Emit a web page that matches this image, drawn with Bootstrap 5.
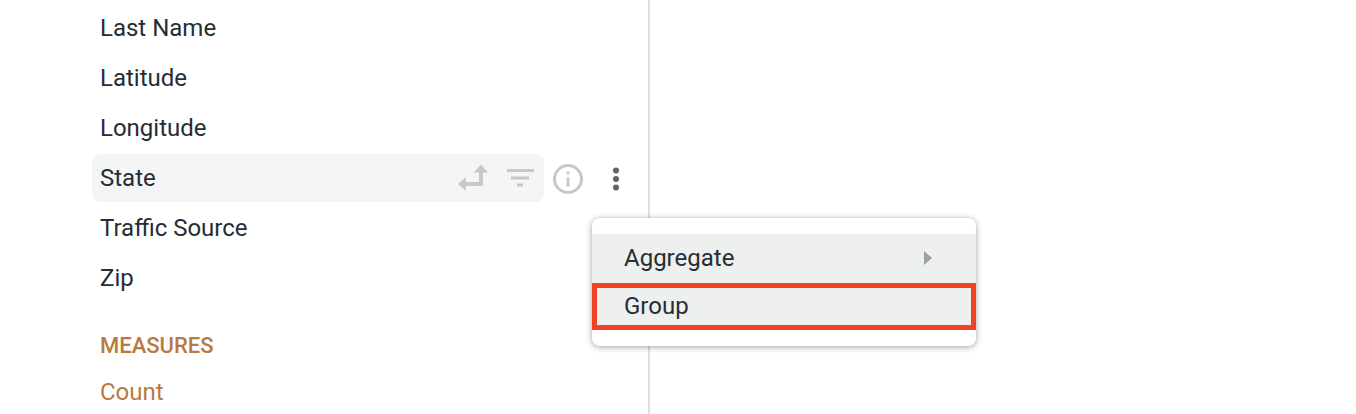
<!DOCTYPE html>
<html lang="en">
<head>
    <meta charset="UTF-8">
    <title>Field picker</title>
    <link rel="stylesheet" href="https://cdn.jsdelivr.net/npm/bootstrap@5.3.0/dist/css/bootstrap.min.css">
    <style>
        html, body { height: 414px; overflow: hidden; }
        body { font-family: Roboto, sans-serif; color: #262d33; background: #fff; position: relative; }
        .field-panel { width: 650px; height: 414px; border-right: 2px solid #dedfe1; padding: 4px 0 0 92px; }
        .field-row { width: 452px; height: 48px; margin-bottom: 2px; padding-left: 8px; font-size: 24px; border-radius: 8px; }
        .field-row.is-hover { background: #f4f5f6; }
        .hover-icons { padding-right: 8px; gap: 8px; }
        .outer-icons { margin-left: 8px; gap: 16px; }
        .group-label { font-size: 22px; font-weight: 500; color: #b97a3f; margin-top: 30px; line-height: 28px; padding-left: 8px; }
        .measure-row { font-size: 24px; color: #b97a3f; padding-left: 8px; margin-top: 18px; line-height: 28px; }
        .field-menu { position: absolute; left: 592px; top: 218px; width: 384px; height: 128px; padding: 16px 0; background: #fff; border-radius: 8px; box-shadow: 0 1px 6px rgba(0,0,0,.38); }
        .menu-row { height: 48px; padding: 0 32px; font-size: 24px; background: #eeefef; }
        .menu-row.is-first { height: 49px; padding-bottom: 1px; }
        .menu-row.is-marked { height: 47px; padding-bottom: 1px; outline: 5px solid #f04326; outline-offset: -5px; }
        .menu-caret { width: 0; height: 0; border-left: 8px solid #9aa0a6; border-top: 7px solid transparent; border-bottom: 7px solid transparent; margin-right: 12px; }
    </style>
</head>
<body>
    <div class="field-panel">
        <div class="field-row d-flex align-items-center">Last Name</div>
        <div class="field-row d-flex align-items-center">Latitude</div>
        <div class="field-row d-flex align-items-center">Longitude</div>
        <div class="d-flex align-items-center">
            <div class="field-row is-hover d-flex align-items-center justify-content-between flex-shrink-0">
                <span>State</span>
                <span class="hover-icons d-flex align-items-center">
                    <svg width="40" height="32" viewBox="0 0 40 32" fill="#c6c8ca"><path d="M8 20H23V8H27V24H8Z"/><path d="M25 2.500L32 10.500H18Z"/><path d="M2 22L10 15V29Z"/></svg>
                    <svg width="32" height="32" viewBox="0 0 32 32" fill="none" stroke="#c6c8ca" stroke-width="3"><path d="M3 8.500H30M7 16H25M13 23H19"/></svg>
                </span>
            </div>
            <span class="outer-icons d-flex align-items-center">
                <svg width="32" height="32" viewBox="0 0 32 32" fill="none" stroke="#c6c8ca" stroke-width="3"><circle cx="16" cy="16" r="13.500"/><path d="M16 14.500V23.500"/><path d="M16 8.500V11.500"/></svg>
                <svg width="32" height="32" viewBox="0 0 32 32" fill="#5f6368"><circle cx="16" cy="7.500" r="3"/><circle cx="16" cy="16" r="3"/><circle cx="16" cy="24.500" r="3"/></svg>
            </span>
        </div>
        <div class="field-row d-flex align-items-center">Traffic Source</div>
        <div class="field-row d-flex align-items-center">Zip</div>
        <div class="group-label">MEASURES</div>
        <div class="measure-row">Count</div>
    </div>

    <div class="field-menu">
        <div class="menu-row is-first d-flex align-items-center justify-content-between">
            <span>Aggregate</span>
            <span class="menu-caret"></span>
        </div>
        <div class="menu-row is-marked d-flex align-items-center">Group</div>
    </div>

    <script src="https://cdn.jsdelivr.net/npm/bootstrap@5.3.0/dist/js/bootstrap.bundle.min.js"></script>
</body>
</html>
